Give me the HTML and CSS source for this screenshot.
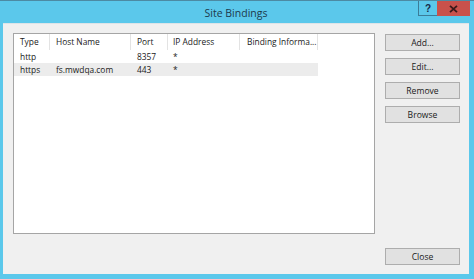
FILE: index.html
```html
<!DOCTYPE html>
<html>
<head>
<meta charset="utf-8">
<title>Site Bindings</title>
<link rel="stylesheet" href="styles.css">
</head>
<body>
<div class="window">
  <div class="titlebar">
    <div class="tb-spacer"></div>
    <div class="tb-title">Site Bindings</div>
    <div class="tb-controls">
      <div class="tb-btn tb-help">?</div>
      <div class="tb-btn tb-close">
        <svg width="9" height="8" viewBox="0 0 9 8"><path d="M1 0.8 L8 7.2 M8 0.8 L1 7.2" stroke="#3a1a1a" stroke-width="1.8"/></svg>
      </div>
    </div>
  </div>
  <div class="content">
    <div class="main">
      <div class="list">
        <div class="row header">
          <div class="c c-type">Type</div>
          <div class="c c-host">Host Name</div>
          <div class="c c-port">Port</div>
          <div class="c c-ip">IP Address</div>
          <div class="c c-bind">Binding Informa...</div>
        </div>
        <div class="row">
          <div class="c c-type">http</div>
          <div class="c c-host"></div>
          <div class="c c-port">8357</div>
          <div class="c c-ip">*</div>
          <div class="c c-bind"></div>
        </div>
        <div class="row selected">
          <div class="c c-type">https</div>
          <div class="c c-host">fs.mwdqa.com</div>
          <div class="c c-port">443</div>
          <div class="c c-ip">*</div>
          <div class="c c-bind"></div>
        </div>
      </div>
      <div class="buttons">
        <div class="btn">Add...</div>
        <div class="btn">Edit...</div>
        <div class="btn">Remove</div>
        <div class="btn">Browse</div>
      </div>
    </div>
    <div class="footer">
      <div class="btn">Close</div>
    </div>
  </div>
</div>
</body>
</html>
```
FILE: styles.css
```css
html, body {
  margin: 0;
  padding: 0;
  width: 474px;
  height: 279px;
  overflow: hidden;
}
body {
  font-family: "Segoe UI", "Open Sans", "Liberation Sans", sans-serif;
  color: #1a1a1a;
}
.window {
  width: 474px;
  height: 279px;
  box-sizing: border-box;
  background: #5bc8eb;
  border-top: 1px solid #4c8aa3;
  padding: 0 5px 5px 3px;
  display: flex;
  flex-direction: column;
}
.titlebar {
  height: 22px;
  display: grid;
  grid-template-columns: 1fr auto 1fr;
}
.tb-title {
  font-size: 10.5px;
  color: #1d3a4c;
  line-height: 22px;
  padding-top: 1px;
}
.tb-controls {
  display: flex;
  justify-content: flex-end;
  align-items: flex-start;
  margin-right: -1px;
}
.tb-btn {
  height: 14px;
  display: flex;
  align-items: center;
  justify-content: center;
}
.tb-help {
  width: 18px;
  border-left: 1px solid #3b7c98;
  border-bottom: 1px solid #3b7c98;
  font-family: "Liberation Sans", sans-serif;
  font-weight: bold;
  font-size: 10px;
  color: #152a48;
}
.tb-close {
  width: 33px;
  background: #c9514b;
  height: 15px;
}
.content {
  flex: 1;
  background: #f0f0f0;
  border-top: 1px solid #dde4e8;
  padding: 9px 9px 9px 10px;
  display: flex;
  flex-direction: column;
}
.main {
  display: flex;
  gap: 10px;
  height: 201px;
}
.list {
  width: 362px;
  box-sizing: border-box;
  background: #ffffff;
  border: 1px solid #a5a5a5;
  font-size: 8.4px;
}
.row {
  display: flex;
  height: 13px;
  line-height: 13px;
  width: 304px;
}
.row.header {
  height: 16px;
  line-height: 16px;
  width: auto;
}
.row.header .c {
  border-right: 1px solid #e3e3e3;
}
.row.selected {
  background: #ececec;
}
.c {
  box-sizing: border-box;
  padding-left: 6px;
  white-space: nowrap;
  overflow: hidden;
}
.c-type { width: 36px; }
.c-host { width: 81px; }
.c-port { width: 37px; }
.c-ip { width: 72px; padding-left: 5px; }
.c-bind { width: 78px; padding-left: 7px; }
.buttons {
  display: flex;
  flex-direction: column;
  gap: 7px;
  padding-top: 1px;
}
.btn {
  width: 75px;
  height: 17px;
  box-sizing: border-box;
  background: #e1e1e1;
  border: 1px solid #adadad;
  font-size: 8.6px;
  display: flex;
  align-items: center;
  justify-content: center;
  color: #1a1a1a;
}
.footer {
  margin-top: auto;
  display: flex;
  justify-content: flex-end;
}
```
